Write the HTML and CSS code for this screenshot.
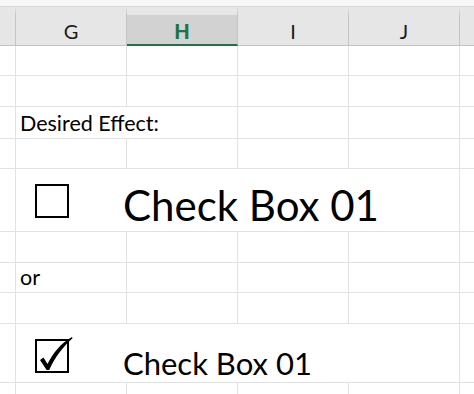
FILE: index.html
```html
<!DOCTYPE html>
<html lang="en">
<head>
  <meta charset="UTF-8">
  <title>Check Box Sheet</title>
  <link rel="stylesheet" href="styles.css">
</head>
<body>
  <div class="topbar"></div>
  <div class="sheet">
    <div class="col-head stub"></div>
    <div class="col-head">G</div>
    <div class="col-head active">H</div>
    <div class="col-head">I</div>
    <div class="col-head">J</div>
    <div class="col-head rest"></div>

    <!-- row 1 -->
    <div class="cell stub r1"></div>
    <div class="cell r1"></div>
    <div class="cell r1"></div>
    <div class="cell r1"></div>
    <div class="cell r1"></div>
    <div class="cell rest r1"></div>

    <!-- row 2 -->
    <div class="cell stub r2"></div>
    <div class="cell r2"></div>
    <div class="cell r2"></div>
    <div class="cell r2"></div>
    <div class="cell r2"></div>
    <div class="cell rest r2"></div>

    <!-- row 3 -->
    <div class="cell stub r3"></div>
    <div class="cell span2 r3 label">Desired Effect:</div>
    <div class="cell r3"></div>
    <div class="cell r3"></div>
    <div class="cell rest r3"></div>

    <!-- row 4 -->
    <div class="cell stub r4"></div>
    <div class="cell r4"></div>
    <div class="cell r4"></div>
    <div class="cell r4"></div>
    <div class="cell r4"></div>
    <div class="cell rest r4"></div>

    <!-- row 5 -->
    <div class="cell stub r5"></div>
    <div class="cell span4 r5 option big">
      <span class="box"></span>
      <span class="option-text">Check Box 01</span>
    </div>
    <div class="cell rest r5"></div>

    <!-- row 6 -->
    <div class="cell stub r6"></div>
    <div class="cell r6"></div>
    <div class="cell r6"></div>
    <div class="cell r6"></div>
    <div class="cell r6"></div>
    <div class="cell rest r6"></div>

    <!-- row 7 -->
    <div class="cell stub r7"></div>
    <div class="cell r7 label">or</div>
    <div class="cell r7"></div>
    <div class="cell r7"></div>
    <div class="cell r7"></div>
    <div class="cell rest r7"></div>

    <!-- row 8 -->
    <div class="cell stub r8"></div>
    <div class="cell r8"></div>
    <div class="cell r8"></div>
    <div class="cell r8"></div>
    <div class="cell r8"></div>
    <div class="cell rest r8"></div>

    <!-- row 9 -->
    <div class="cell stub r9"></div>
    <div class="cell span4 r9 option small">
      <span class="box checked">
        <svg viewBox="0 0 34 34" width="34" height="34">
          <path d="M5 21 L8.5 18.5 L12.5 25 C18 14 26 4 37 -2 L37.5 -0.8 C28 8 20 18 14.2 31 L11.6 31 Z" fill="#000"/>
        </svg>
      </span>
      <span class="option-text">Check Box 01</span>
    </div>
    <div class="cell rest r9"></div>

    <!-- row 10 -->
    <div class="cell stub"></div>
    <div class="cell"></div>
    <div class="cell"></div>
    <div class="cell"></div>
    <div class="cell"></div>
    <div class="cell rest"></div>
  </div>
</body>
</html>
```

FILE: styles.css
```css
:root {
  --grid-line: #e2e2e2;
  --head-bg: #e6e6e6;
  --head-line: #c4c4c4;
  --active-bg: #d2d2d2;
  --excel-green: #217346;
}

* {
  box-sizing: border-box;
  margin: 0;
  padding: 0;
}

body {
  width: 474px;
  height: 394px;
  overflow: hidden;
  background: #fff;
  font-family: Lato, "Open Sans", sans-serif;
  color: #000;
}

.topbar {
  height: 7px;
  background: #f7f7f7;
  border-bottom: 1px solid #d6d6d6;
}

.sheet {
  display: grid;
  grid-template-columns: 16px repeat(4, 111px) 1fr;
  grid-template-rows: 39px 30px 31px 32px 30px 63px 31px 30px 31px 59px 20px;
}

.col-head {
  background: var(--head-bg);
  border-bottom: 1px solid var(--head-line);
  border-top: 8px solid var(--head-bg);
  border-right: 1px solid var(--head-line);
  display: flex;
  align-items: center;
  justify-content: center;
  font-size: 20px;
  color: #1a1a1a;
  padding-top: 2px;
}

.col-head.active {
  background: var(--active-bg);
  color: var(--excel-green);
  font-weight: 900;
  border-bottom: 2px solid var(--excel-green);
  padding-top: 3px;
}

.col-head.rest {
  border-right: none;
}

.cell {
  border-right: 1px solid var(--grid-line);
  border-bottom: 1px solid var(--grid-line);
  display: flex;
  align-items: flex-end;
  white-space: nowrap;
}

.cell.rest {
  border-right: none;
}

.span2 {
  grid-column: span 2;
}

.span4 {
  grid-column: span 4;
}

.label {
  font-size: 21.5px;
  padding-left: 4px;
  padding-bottom: 2px;
}

.option {
  padding-left: 19px;
}

.box {
  display: block;
  width: 34px;
  height: 34px;
  border: 2px solid #000;
  flex: none;
  position: relative;
}

.box svg {
  position: absolute;
  left: -2px;
  top: -2px;
  overflow: visible;
}

.option-text {
  display: block;
  line-height: 1;
}

.big {
  padding-bottom: 13px;
}

.big .option-text {
  font-size: 42px;
  margin-left: 54px;
  margin-bottom: -8px;
}

.small {
  padding-bottom: 9px;
}

.small .option-text {
  font-size: 31px;
  margin-left: 54px;
  margin-bottom: -6px;
}
```
